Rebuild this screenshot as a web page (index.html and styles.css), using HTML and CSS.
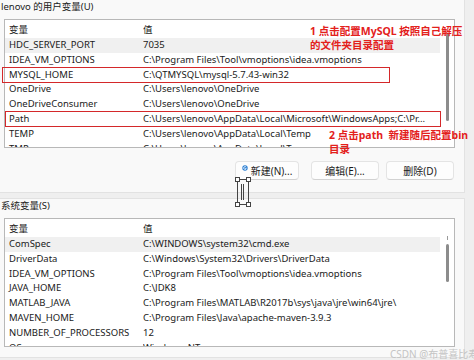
FILE: index.html
```html
<!DOCTYPE html>
<html lang="zh">
<head>
<meta charset="utf-8">
<link rel="stylesheet" href="styles.css">
</head>
<body>
<div class="page">
  <section class="group group-user">
    <div class="group-title">lenovo 的用户变量(U)</div>
    <div class="list">
      <div class="rows">
        <div class="row head"><span class="c1">变量</span><span class="c2">值</span></div>
        <div class="row sel"><span class="c1">HDC_SERVER_PORT</span><span class="c2">7035</span></div>
        <div class="row"><span class="c1">IDEA_VM_OPTIONS</span><span class="c2">C:\Program Files\Tool\vmoptions\idea.vmoptions</span></div>
        <div class="row"><span class="c1">MYSQL_HOME</span><span class="c2">C:\QTMYSQL\mysql-5.7.43-win32</span></div>
        <div class="row"><span class="c1">OneDrive</span><span class="c2">C:\Users\lenovo\OneDrive</span></div>
        <div class="row"><span class="c1">OneDriveConsumer</span><span class="c2">C:\Users\lenovo\OneDrive</span></div>
        <div class="row"><span class="c1">Path</span><span class="c2">C:\Users\lenovo\AppData\Local\Microsoft\WindowsApps;C:\Pr...</span></div>
        <div class="row"><span class="c1">TEMP</span><span class="c2">C:\Users\lenovo\AppData\Local\Temp</span></div>
        <div class="row"><span class="c1">TMP</span><span class="c2">C:\Users\lenovo\AppData\Local\Temp</span></div>
      </div>
      <div class="scroll"><div class="thumb thumb-user"></div></div>
    </div>
    <div class="buttons">
      <button class="btn btn-new"><svg class="ico" viewBox="0 0 6 6" width="6" height="6"><circle cx="3" cy="3" r="2.7" fill="#2a7fd4"/><path d="M4.2 2.2 A1.4 1.4 0 1 0 4.3 3.6 L3.1 3.6" fill="none" stroke="#fff" stroke-width="0.8"/></svg>新建(N)...</button>
      <button class="btn">编辑(E)...</button>
      <button class="btn">删除(D)</button>
    </div>
  </section>

  <section class="group group-sys">
    <div class="group-title">系统变量(S)</div>
    <div class="list">
      <div class="rows">
        <div class="row head"><span class="c1">变量</span><span class="c2">值</span></div>
        <div class="row sel"><span class="c1">ComSpec</span><span class="c2">C:\WINDOWS\system32\cmd.exe</span></div>
        <div class="row"><span class="c1">DriverData</span><span class="c2">C:\Windows\System32\Drivers\DriverData</span></div>
        <div class="row"><span class="c1">IDEA_VM_OPTIONS</span><span class="c2">C:\Program Files\Tool\vmoptions\idea.vmoptions</span></div>
        <div class="row"><span class="c1">JAVA_HOME</span><span class="c2">C:\JDK8</span></div>
        <div class="row"><span class="c1">MATLAB_JAVA</span><span class="c2">C:\Program Files\MATLAB\R2017b\sys\java\jre\win64\jre\</span></div>
        <div class="row"><span class="c1">MAVEN_HOME</span><span class="c2">C:\Program Files\Java\apache-maven-3.9.3</span></div>
        <div class="row"><span class="c1">NUMBER_OF_PROCESSORS</span><span class="c2">12</span></div>
        <div class="row"><span class="c1">OS</span><span class="c2">Windows_NT</span></div>
      </div>
      <div class="scroll"><div class="arrow"></div><div class="thumb thumb-sys"></div></div>
    </div>
  </section>

  <div class="mark mark-mysql"></div>
  <div class="mark mark-path"></div>
  <div class="note note-1">1 点击配置MySQL 按照自己解压<br>的文件夹目录配置</div>
  <div class="note note-2">2 点击path&nbsp; 新建随后配置bin<br>目录</div>
  <svg class="handle" width="18" height="32" viewBox="0 0 18 32">
    <g fill="#fff" stroke="#444" stroke-width="1">
      <line x1="3.5" y1="5" x2="3.5" y2="27"/>
      <line x1="14.5" y1="5" x2="14.5" y2="27"/>
      <line x1="5" y1="3.5" x2="13" y2="3.5"/>
      <line x1="5" y1="28.5" x2="13" y2="28.5"/>
      <line x1="7.5" y1="8" x2="7.5" y2="24"/>
      <line x1="9.5" y1="8" x2="9.5" y2="24"/>
      <rect x="1.5" y="1.5" width="4" height="4"/>
      <rect x="12.5" y="1.5" width="4" height="4"/>
      <rect x="1.5" y="26.5" width="4" height="4"/>
      <rect x="12.5" y="26.5" width="4" height="4"/>
    </g>
  </svg>
  <div class="watermark">CSDN @布普喜比寿</div>
</div>
</body>
</html>
```
FILE: styles.css
```css
* { box-sizing: border-box; }
html, body {
  margin: 0;
  padding: 0;
}
body {
  width: 474px;
  height: 360px;
  overflow: hidden;
  background: #efefef;
  font-family: "Noto Sans", "Noto Sans CJK SC", sans-serif;
  font-size: 9.5px;
  color: #1a1a1a;
}
.page {
  position: relative;
  width: 474px;
  height: 360px;
}
.group {
  margin-left: -1px;
  width: 466px;
  background: #f9f9f9;
  border: 1px solid #e2e2e2;
}
.group-user {
  height: 193px;
  border-top: none;
}
.group-sys {
  margin-top: 5px;
  height: 160px;
}
.group-title {
  height: 14px;
  line-height: 14px;
  padding-left: 1px;
  white-space: nowrap;
}
.list {
  margin-top: 5px;
  margin-left: 4px;
  width: 451px;
  height: 129px;
  background: #fff;
  border: 1px solid #b8b8b8;
  display: flex;
  overflow: hidden;
}
.rows {
  width: 435px;
  flex: none;
}
.row {
  height: 14.8px;
  line-height: 14.8px;
  display: flex;
  white-space: nowrap;
}
.row.head {
  height: 18px;
  line-height: 20px;
}
.row.sel { background: #f0f0f0; }
.c1 {
  width: 138px;
  padding-left: 4px;
  flex: none;
}
.c2 {
  flex: 1;
  overflow: hidden;
}
.scroll {
  flex: 1;
  position: relative;
}
.thumb {
  position: absolute;
  left: 6px;
  width: 2.5px;
  border-radius: 2px;
  background: #8c8c8c;
}
.thumb-user { top: 13px; height: 88px; }
.thumb-sys { top: 25px; height: 38px; }
.arrow {
  position: absolute;
  left: 6.5px;
  top: 17px;
  width: 1.5px;
  height: 4px;
  background: #9a9a9a;
}
.buttons {
  display: flex;
  justify-content: flex-end;
  gap: 7px;
  margin-top: 13px;
  padding-right: 10px;
}
.btn {
  height: 19px;
  width: 68px;
  padding: 0;
  background: #fdfdfd;
  border: 1px solid #e4e4e4;
  border-bottom-color: #d2d2d2;
  border-radius: 4px;
  font: inherit;
  font-size: 10px;
  color: #1a1a1a;
  display: flex;
  align-items: center;
  justify-content: center;
  white-space: nowrap;
}
.btn-new {
  width: 64px;
  margin-right: 5px;
}
.ico {
  margin-right: 3px;
  margin-top: -5px;
}
.mark {
  position: absolute;
  border: 1.5px solid #d4282a;
}
.mark-mysql { left: 2px; top: 67px; width: 388px; height: 16px; }
.mark-path { left: 5px; top: 111px; width: 436px; height: 16px; }
.note {
  position: absolute;
  color: #e3201b;
  font-weight: bold;
  font-size: 10.5px;
  line-height: 14px;
  white-space: nowrap;
}
.note-1 { left: 310px; top: 24px; }
.note-2 { left: 329px; top: 128px; }
.handle {
  position: absolute;
  left: 234px;
  top: 176px;
}
.watermark {
  position: absolute;
  left: 390px;
  top: 346px;
  color: #c4c4c4;
  font-size: 10px;
  white-space: nowrap;
}
```
